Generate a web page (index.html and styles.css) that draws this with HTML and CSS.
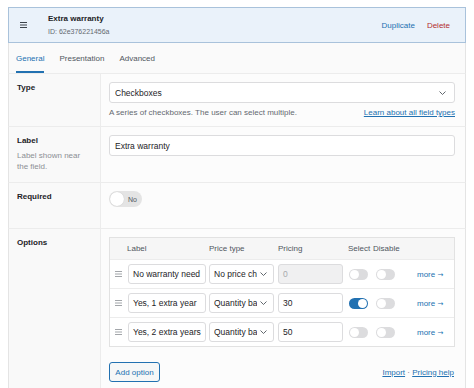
FILE: index.html
```html
<!DOCTYPE html>
<html lang="en">
<head>
  <meta charset="UTF-8" />
  <meta name="viewport" content="width=device-width, initial-scale=1.0"/>
  <title>Field editor</title>
  <link rel="stylesheet" href="styles.css">
</head>
<body>

  <div class="card">
    <!-- Field header -->
    <div class="card-head">
      <svg class="drag" width="7" height="6" viewBox="0 0 7 6"><path d="M0 0.5h7M0 3h7M0 5.5h7" stroke="#3c434a" stroke-width="1"/></svg>
      <div class="card-title">
        <div class="title">Extra warranty</div>
        <div class="sub-id">ID: 62e376221456a</div>
      </div>
      <div class="card-actions">
        <a class="act">Duplicate</a>
        <a class="act act-del">Delete</a>
      </div>
    </div>

    <div class="tabs">
      <div class="tab active">General</div>
      <div class="tab">Presentation</div>
      <div class="tab">Advanced</div>
    </div>

    <!-- Type -->
    <div class="field">
      <div class="field-label"><div class="lbl">Type</div></div>
      <div class="field-body">
        <div class="select">
          <span class="select-text">Checkboxes</span>
          <svg width="7" height="4" viewBox="0 0 7 4"><path d="M0.5 0.5l3 3 3-3" fill="none" stroke="#50575e" stroke-width="0.9"/></svg>
        </div>
        <div class="desc-row">
          <span class="desc">A series of checkboxes. The user can select multiple.</span>
          <a class="link">Learn about all field types</a>
        </div>
      </div>
    </div>

    <!-- Label -->
    <div class="field">
      <div class="field-label">
        <div class="lbl">Label</div>
        <div class="hint">Label shown near<br>the field.</div>
      </div>
      <div class="field-body">
        <div class="input">Extra warranty</div>
      </div>
    </div>

    <!-- Required -->
    <div class="field field-required">
      <div class="field-label"><div class="lbl">Required</div></div>
      <div class="field-body">
        <div class="big-toggle"><span class="knob"></span><span class="big-toggle-text">No</span></div>
      </div>
    </div>

    <!-- Options -->
    <div class="field field-options">
      <div class="field-label"><div class="lbl">Options</div></div>
      <div class="field-body">
        <div class="opts">
          <div class="opt-row opt-head">
            <span></span>
            <span>Label</span>
            <span>Price type</span>
            <span>Pricing</span>
            <span class="h-select">Select</span>
            <span class="h-disable">Disable</span>
            <span></span>
          </div>

          <div class="opt-row">
            <svg class="handle" width="7" height="6" viewBox="0 0 7 6"><path d="M0 0.5h7M0 3h7M0 5.5h7" stroke="#8c8f94" stroke-width="0.8"/></svg>
            <div class="input sm w-label">No warranty need</div>
            <div class="select sm w-price"><span class="select-text">No price ch</span><svg width="7" height="4" viewBox="0 0 7 4"><path d="M0.5 0.5l3 3 3-3" fill="none" stroke="#50575e" stroke-width="0.9"/></svg></div>
            <div class="input sm w-num disabled">0</div>
            <span class="toggle"></span>
            <span class="toggle"></span>
            <a class="more">more <span class="arrow">&rarr;</span></a>
          </div>

          <div class="opt-row">
            <svg class="handle" width="7" height="6" viewBox="0 0 7 6"><path d="M0 0.5h7M0 3h7M0 5.5h7" stroke="#8c8f94" stroke-width="0.8"/></svg>
            <div class="input sm w-label">Yes, 1 extra year</div>
            <div class="select sm w-price"><span class="select-text">Quantity ba</span><svg width="7" height="4" viewBox="0 0 7 4"><path d="M0.5 0.5l3 3 3-3" fill="none" stroke="#50575e" stroke-width="0.9"/></svg></div>
            <div class="input sm w-num">30</div>
            <span class="toggle on"></span>
            <span class="toggle"></span>
            <a class="more">more <span class="arrow">&rarr;</span></a>
          </div>

          <div class="opt-row">
            <svg class="handle" width="7" height="6" viewBox="0 0 7 6"><path d="M0 0.5h7M0 3h7M0 5.5h7" stroke="#8c8f94" stroke-width="0.8"/></svg>
            <div class="input sm w-label">Yes, 2 extra years</div>
            <div class="select sm w-price"><span class="select-text">Quantity ba</span><svg width="7" height="4" viewBox="0 0 7 4"><path d="M0.5 0.5l3 3 3-3" fill="none" stroke="#50575e" stroke-width="0.9"/></svg></div>
            <div class="input sm w-num">50</div>
            <span class="toggle"></span>
            <span class="toggle"></span>
            <a class="more">more <span class="arrow">&rarr;</span></a>
          </div>
        </div>

        <div class="opts-foot">
          <button class="btn">Add option</button>
          <div class="foot-links"><a class="link">Import</a> &middot; <a class="link">Pricing help</a></div>
        </div>
      </div>
    </div>
  </div>

</body>
</html>
```

FILE: styles.css
```css
:root {
  --blue: #2271b1;
  --red: #b32d2e;
  --text: #1d2327;
  --muted: #646970;
  --line: #e4e4e4;
}

* {
  box-sizing: border-box;
  margin: 0;
  padding: 0;
}

body {
  font-family: 'Liberation Sans', Arial, sans-serif;
  font-size: 8px;
  color: var(--text);
  background: #fff;
}

a {
  cursor: pointer;
}

.card {
  width: 458px;
  margin: 7px 0 0 8px;
}

.card-head {
  display: flex;
  align-items: center;
  height: 36px;
  padding: 0 15px 0 11px;
  background: #eaf2fa;
  border: 1px solid #a9c2db;
}

.drag {
  display: block;
}

.card-title {
  margin-left: 21px;
}

.title {
  font-weight: bold;
  line-height: 11px;
}

.sub-id {
  font-size: 7px;
  color: var(--muted);
  line-height: 10px;
  margin-top: 3px;
}

.card-actions {
  margin-left: auto;
  display: flex;
  gap: 12px;
}

.act {
  color: var(--blue);
}

.act-del {
  color: var(--red);
}

.tabs {
  display: flex;
  gap: 15px;
  height: 31px;
  padding-left: 7px;
  background: #fafafa;
  border-left: 1px solid var(--line);
  border-right: 1px solid var(--line);
  border-bottom: 1px solid #ececec;
}

.tab {
  height: 30px;
  display: flex;
  align-items: center;
  color: #50575e;
  border-bottom: 2px solid transparent;
  padding-top: 2px;
}

.tab.active {
  color: var(--blue);
  border-bottom-color: var(--blue);
}

.field {
  display: grid;
  grid-template-columns: 92px 1fr;
  background: #fcfcfc;
  border-left: 1px solid var(--line);
  border-right: 1px solid var(--line);
  border-bottom: 1px solid #ececec;
}

.field-label {
  padding: 8px 8px 10px;
  background: #f9f9f9;
  border-right: 1px solid #ececec;
}

.lbl {
  font-weight: bold;
  line-height: 12px;
}

.hint {
  margin-top: 3px;
  line-height: 11px;
  color: #8c8f94;
}

.field-body {
  padding: 8px 10px 7px 8px;
}

.field-required {
  min-height: 46px;
}

.select,
.input {
  display: flex;
  align-items: center;
  height: 21px;
  padding: 0 8px 0 5px;
  font-size: 8.5px;
  background: #fff;
  border: 1px solid #dcdcde;
  border-radius: 3px;
  white-space: nowrap;
  overflow: hidden;
}

.select {
  justify-content: space-between;
}

.select-text {
  overflow: hidden;
}

.select svg {
  flex-shrink: 0;
}

.desc-row {
  display: flex;
  justify-content: space-between;
  margin-top: 4px;
  line-height: 12px;
}

.desc {
  color: var(--muted);
}

.link {
  color: var(--blue);
  text-decoration: underline;
}

.big-toggle {
  display: flex;
  align-items: center;
  width: 33px;
  height: 16px;
  padding: 1px;
  border-radius: 8px;
  background: #e4e4e4;
}

.big-toggle .knob {
  width: 14px;
  height: 14px;
  border-radius: 50%;
  background: #fff;
  box-shadow: 0 0 1px rgba(0, 0, 0, 0.2);
}

.big-toggle-text {
  margin-left: 4px;
  font-size: 7px;
  color: #50575e;
}

.field-options .field-body {
  padding-bottom: 12px;
}

.opts {
  background: #fff;
  border: 1px solid #e2e2e2;
}

.opt-row {
  display: grid;
  grid-template-columns: 18px 81px 69px 71px 27px 41px 1fr;
  align-items: center;
  height: 29px;
  border-bottom: 1px solid #ececec;
}

.opt-row:last-child {
  height: 28px;
  border-bottom: none;
}

.opt-head {
  height: 22px;
  background: #f6f6f6;
  color: #50575e;
}

.opt-head span:nth-child(2) {
  margin-left: -1px;
}

.h-select {
  margin-left: -1px;
}

.h-disable {
  margin-left: -3px;
}

.handle {
  display: block;
  margin-left: 5px;
}

.input.sm,
.select.sm {
  height: 20px;
  padding-left: 4px;
}

.select.sm {
  padding-right: 6px;
}

.w-label {
  width: 78px;
}

.w-price {
  width: 65px;
}

.w-num {
  width: 65px;
}

.input.disabled {
  background: #f0f0f1;
  color: #a7aaad;
}

.toggle {
  position: relative;
  width: 19px;
  height: 11px;
  border-radius: 6px;
  background: #dcdcde;
}

.toggle::after {
  content: '';
  position: absolute;
  top: 1px;
  left: 1px;
  width: 9px;
  height: 9px;
  border-radius: 50%;
  background: #fff;
}

.toggle.on {
  background: var(--blue);
}

.toggle.on::after {
  left: 9px;
}

.more {
  color: var(--blue);
}

.arrow {
  font-family: 'DejaVu Sans', sans-serif;
  font-size: 7px;
}

.opts-foot {
  display: flex;
  justify-content: space-between;
  align-items: center;
  margin-top: 15px;
}

.btn {
  height: 20px;
  width: 51px;
  font-family: inherit;
  font-size: 8px;
  color: var(--blue);
  background: #f6f7f7;
  border: 1px solid var(--blue);
  border-radius: 3px;
}

.foot-links {
  color: var(--muted);
  padding-right: 1px;
}
```
